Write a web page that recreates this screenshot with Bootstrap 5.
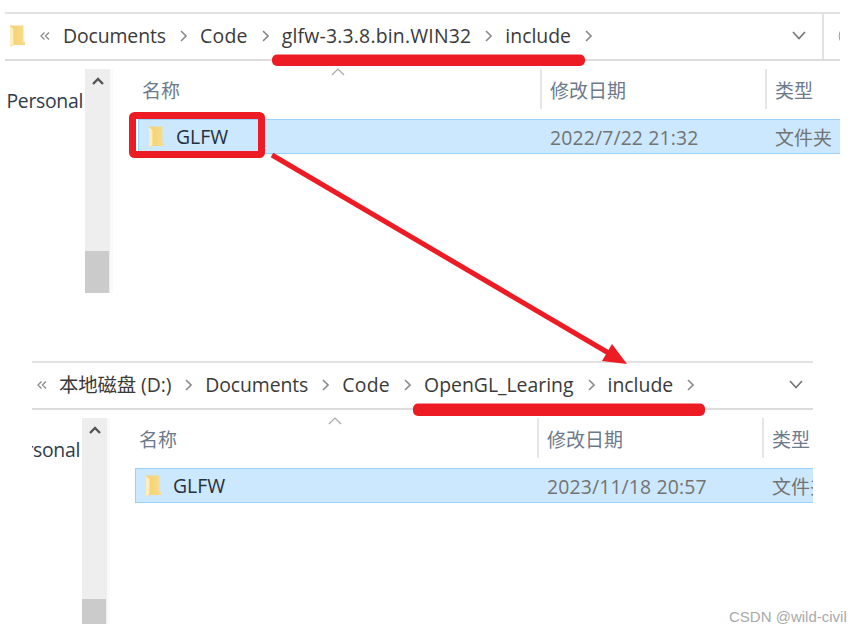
<!DOCTYPE html>
<html lang="zh">
<head>
<meta charset="utf-8">
<title>GLFW include</title>
<link href="https://cdn.jsdelivr.net/npm/bootstrap@5.3.0/dist/css/bootstrap.min.css" rel="stylesheet">
<style>
html,body{height:100%;}
body{width:863px;height:632px;overflow:hidden;background:#fff;position:relative;font-family:"Open Sans","Noto Sans CJK SC",sans-serif;font-size:19.4px;color:#333;}
.xwin{overflow:hidden;}
.win-a{margin:12px 0 0 5px;width:835px;height:281px;}
.win-b{margin:68px 0 0 32px;width:781px;height:263px;}
.addr{height:49px;border-top:2px solid #e2e2e2;border-bottom:2px solid #dcdcdc;white-space:nowrap;line-height:1;padding-bottom:2px;}
.crumb{color:#3a3a3a;}
.cr-doc{letter-spacing:-.1px;}
.cr-code{letter-spacing:.3px;}
.cr-glfw{letter-spacing:.2px;}
.cr-disk{letter-spacing:-.1px;}
.gt{width:7px;height:12px;flex:none;margin:0 13px 0 14px;}
.dbl{width:10px;height:10px;flex:none;margin-right:13px;}
.win-b .dbl{margin-left:5px;margin-right:12px;}
.lead-ico{margin-left:5px;margin-right:15px;}
.ddown{width:14px;height:9px;flex:none;}
.win-a .ddown{margin-right:16px;}
.win-b .ddown{margin-right:10px;}
.vsep{width:2px;align-self:stretch;background:#e2e2e2;flex:none;margin-bottom:-2px;}
.frag{width:2px;height:10px;flex:none;margin-left:14px;}
.side{overflow:hidden;color:#2f3b4a;padding:20px 2px 0 0;line-height:24px;white-space:nowrap;flex:none;letter-spacing:-.3px;}
.win-a .side{width:80px;}
.win-b .side{width:50px;}
.pane{margin-top:8px;height:224px;}
.win-b .pane{height:206px;}
.sbar{width:25px;background:#eeeeee;flex:none;position:relative;}
.sbar svg{display:block;margin:8px auto 0;}
.thumb{position:absolute;left:0;right:1px;bottom:0;background:#cbcbcb;}
.win-a .thumb{height:42px;}
.win-b .thumb{height:25px;}
.flist{flex:1 1 auto;min-width:0;border-left:3px solid #fafafa;position:relative;}
.hdr{height:40px;color:#6c7a8c;line-height:44px;position:relative;font-size:19px;}
.colname{width:427px;flex:none;}
.coldate{width:225px;flex:none;}
.hdr .colname{padding-left:29px;}
.hdr .coldate,.hdr .coltype{padding-left:8px;border-left:2px solid #e6e6e6;}
.hdr .coltype{flex:1;white-space:nowrap;line-height:44px;}
.caret-up{position:absolute;left:218px;top:-1px;width:14px;height:8px;}
.frow{height:35px;margin:10px 0 0 25px;background:#cce8ff;border:1px solid #99d1ff;border-right:0;line-height:36px;white-space:nowrap;overflow:hidden;}
.frow .colname{width:401px;padding-left:10px;color:#26303c;}
.frow .coldate,.frow .coltype{color:#737373;padding-left:10px;}
.frow .coldate{width:225px;letter-spacing:.14px;}
.frow .coltype{font-size:19px;}
.ico{width:15px;height:22px;flex:none;}
.frow .ico{margin-right:12px;}
.overlay{position:absolute;left:0;top:0;width:863px;height:632px;pointer-events:none;}
.mark-wm{position:absolute;left:729px;top:608px;font-family:"Liberation Sans",sans-serif;font-size:15px;line-height:17px;color:#a9a9a9;white-space:nowrap;}
</style>
</head>
<body>
<svg width="0" height="0" class="d-block position-absolute">
  <defs>
    <linearGradient id="fg" x1="0" y1="0" x2="1" y2="0"><stop offset="0" stop-color="#f4d06e"/><stop offset="1" stop-color="#f8dd8f"/></linearGradient>
    <symbol id="fold" viewBox="0 0 15 22"><path d="M0 0.5H13.5V16.5L15 17V20H3.5L1 22 0 20Z" fill="url(#fg)"/><path d="M0 1 3.5 4V19L1 21.5 0 20Z" fill="#fdeebd"/></symbol>
    <symbol id="gtm" viewBox="0 0 7 12"><path d="M1 1 6 6 1 11" fill="none" stroke="#8b8b8b" stroke-width="1.6"/></symbol>
    <symbol id="dblm" viewBox="0 0 10 10"><path d="M4.5 1.5 1 5 4.5 8.5M9 1.5 5.5 5 9 8.5" fill="none" stroke="#8b8b8b" stroke-width="1.3"/></symbol>
    <symbol id="dnm" viewBox="0 0 14 9"><path d="M1 1 7 7.5 13 1" fill="none" stroke="#777" stroke-width="1.7"/></symbol>
    <symbol id="upm" viewBox="0 0 14 8"><path d="M1 7 7 1 13 7" fill="none" stroke="#a8a8a8" stroke-width="1.2"/></symbol>
    <symbol id="sbm" viewBox="0 0 12 8"><path d="M1 7 6 2 11 7" fill="none" stroke="#555" stroke-width="2.4"/></symbol>
  </defs>
</svg>

<section class="xwin win-a">
  <div class="addr d-flex align-items-center">
    <svg class="ico lead-ico"><use href="#fold"/></svg>
    <svg class="dbl"><use href="#dblm"/></svg>
    <span class="crumb cr-doc">Documents</span><svg class="gt"><use href="#gtm"/></svg>
    <span class="crumb cr-code">Code</span><svg class="gt"><use href="#gtm"/></svg>
    <span class="crumb cr-glfw">glfw-3.3.8.bin.WIN32</span><svg class="gt"><use href="#gtm"/></svg>
    <span class="crumb">include</span><svg class="gt"><use href="#gtm"/></svg>
    <svg class="ddown ms-auto"><use href="#dnm"/></svg>
    <span class="vsep"></span>
    <svg class="frag" viewBox="0 0 2 10"><path d="M2 0.5Q0.3 5 2 9.5" fill="none" stroke="#9a9a9a" stroke-width="1"/></svg>
  </div>
  <div class="pane d-flex">
    <div class="side d-flex justify-content-end">Personal</div>
    <div class="sbar"><svg width="12" height="8"><use href="#sbm"/></svg><div class="thumb"></div></div>
    <div class="flist">
      <div class="hdr d-flex">
        <svg class="caret-up"><use href="#upm"/></svg>
        <div class="colname">名称</div><div class="coldate">修改日期</div><div class="coltype">类型</div>
      </div>
      <div class="frow d-flex">
        <div class="colname d-flex align-items-center"><svg class="ico"><use href="#fold"/></svg>GLFW</div>
        <div class="coldate">2022/7/22 21:32</div><div class="coltype">文件夹</div>
      </div>
    </div>
  </div>
</section>

<section class="xwin win-b">
  <div class="addr d-flex align-items-center">
    <svg class="dbl"><use href="#dblm"/></svg>
    <span class="crumb cr-disk">本地磁盘 (D:)</span><svg class="gt"><use href="#gtm"/></svg>
    <span class="crumb cr-doc">Documents</span><svg class="gt"><use href="#gtm"/></svg>
    <span class="crumb cr-code">Code</span><svg class="gt"><use href="#gtm"/></svg>
    <span class="crumb">OpenGL_Learing</span><svg class="gt"><use href="#gtm"/></svg>
    <span class="crumb">include</span><svg class="gt"><use href="#gtm"/></svg>
    <svg class="ddown ms-auto"><use href="#dnm"/></svg>
  </div>
  <div class="pane d-flex">
    <div class="side d-flex justify-content-end">Personal</div>
    <div class="sbar"><svg width="12" height="8"><use href="#sbm"/></svg><div class="thumb"></div></div>
    <div class="flist">
      <div class="hdr d-flex">
        <svg class="caret-up"><use href="#upm"/></svg>
        <div class="colname">名称</div><div class="coldate">修改日期</div><div class="coltype">类型</div>
      </div>
      <div class="frow d-flex">
        <div class="colname d-flex align-items-center"><svg class="ico"><use href="#fold"/></svg>GLFW</div>
        <div class="coldate">2023/11/18 20:57</div><div class="coltype">文件夹</div>
      </div>
    </div>
  </div>
</section>

<svg class="overlay" viewBox="0 0 863 632">
  <rect x="272" y="54.5" width="313" height="11.5" rx="5" fill="#ed1c24"/>
  <rect x="413" y="403.5" width="292" height="12.5" rx="5" fill="#ed1c24"/>
  <rect x="132.5" y="115.5" width="129" height="39" rx="2" fill="none" stroke="#ed1c24" stroke-width="7"/>
  <path d="M272 155 612 355" stroke="#ed1c24" stroke-width="5" fill="none"/>
  <path d="M627 364 602 361 612 344Z" fill="#ed1c24"/>
</svg>
<div class="mark-wm">CSDN @wild-civil</div>
</body>
</html>
